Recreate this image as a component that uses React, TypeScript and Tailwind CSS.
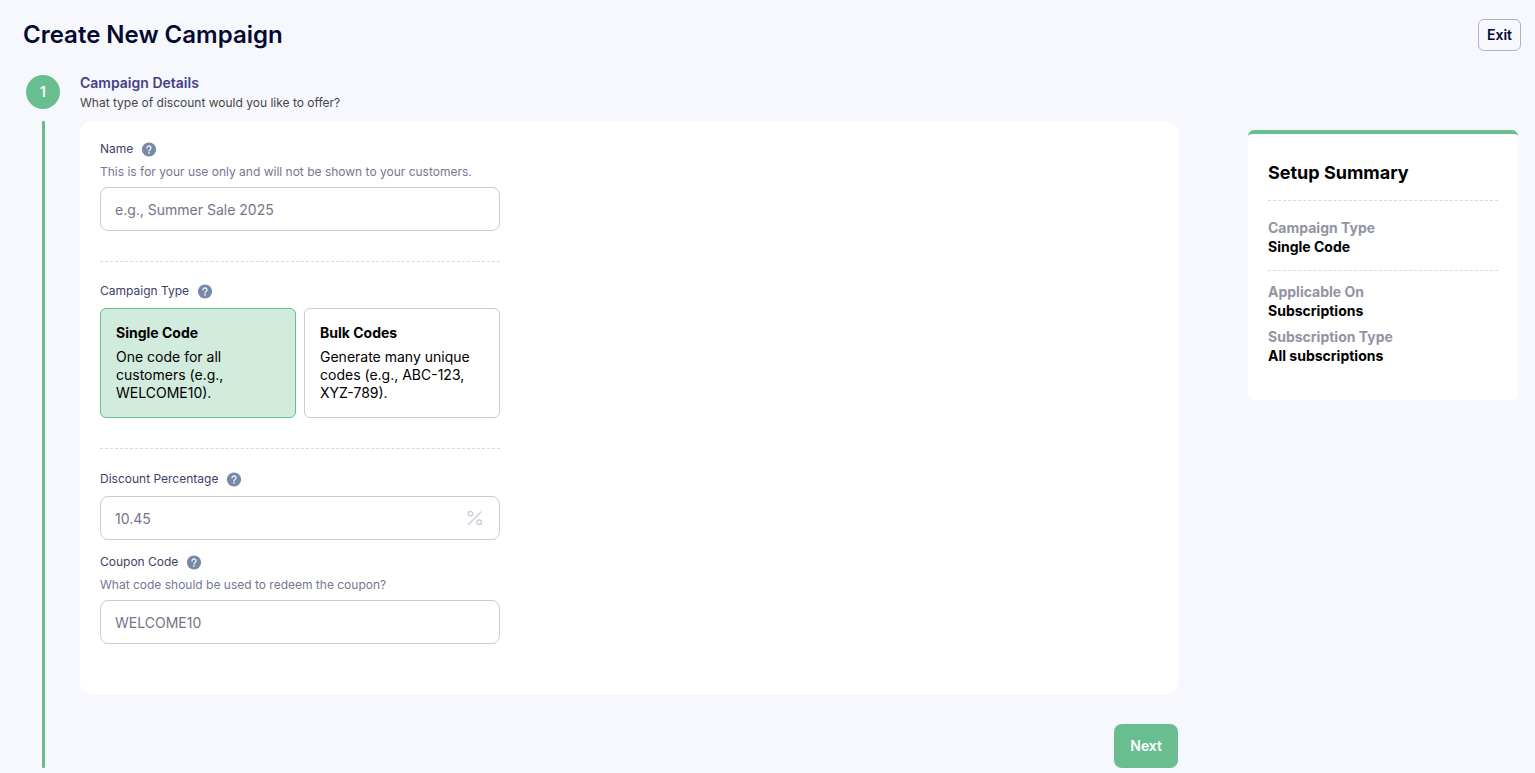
import { useState } from "react";
import type { ReactNode } from "react";

function HelpIcon() {
  return (
    <svg viewBox="0 0 16 16" className="h-4 w-4" aria-hidden="true">
      <circle cx="8" cy="8.5" r="7.1" fill="#7789a6" />
      <path
        d="M6 7a2 2 0 1 1 3.1 1.6c-.8.5-1.1.7-1.1 1.3"
        fill="none"
        stroke="#fff"
        strokeWidth="1.2"
        strokeLinecap="round"
      />
      <circle cx="8" cy="11.9" r="0.8" fill="#fff" />
    </svg>
  );
}

function PercentIcon() {
  return (
    <svg
      viewBox="0 0 16 16"
      className="h-4 w-4"
      fill="none"
      stroke="#c9cad6"
      strokeWidth="1.3"
      strokeLinecap="round"
      aria-hidden="true"
    >
      <path d="M1.7 14.2 14 2" />
      <circle cx="3.4" cy="3.6" r="2.3" />
      <circle cx="12.2" cy="12.2" r="2.3" />
    </svg>
  );
}

function LabelRow({ children }: { children: ReactNode }) {
  return (
    <div className="flex items-center gap-2 text-xs leading-4 text-[#3f4168]">
      {children}
      <HelpIcon />
    </div>
  );
}

type FieldProps = {
  id: string;
  label: string;
  placeholder: string;
  hint?: string;
  icon?: ReactNode;
};

function Field({ id, label, placeholder, hint, icon }: FieldProps) {
  return (
    <div>
      <LabelRow>
        <label htmlFor={id}>{label}</label>
      </LabelRow>
      {hint && <p className="mt-[7px] text-xs leading-4 text-[#757795]">{hint}</p>}
      <div
        className={`flex h-11 items-center rounded-lg border border-[#cbcbd6] bg-white px-[14px] ${
          hint ? "mt-[7px]" : "mt-[9px]"
        }`}
      >
        <input
          id={id}
          type="text"
          placeholder={placeholder}
          className="h-full min-w-0 flex-1 bg-transparent text-sm text-[#3f4168] outline-none placeholder:text-[#757589]"
        />
        {icon && <span className="mr-[2px]">{icon}</span>}
      </div>
    </div>
  );
}

function TypeOption(props: {
  title: string;
  text: string;
  checked: boolean;
  onSelect: () => void;
}) {
  return (
    <label
      className={`block flex-1 cursor-pointer rounded-[6px] border p-[15px] text-black ${
        props.checked ? "border-[#68be8f] bg-[#d1ebdd]" : "border-[#cbcbcb] bg-white"
      }`}
    >
      <input
        type="radio"
        name="campaign-type"
        className="sr-only"
        checked={props.checked}
        onChange={props.onSelect}
      />
      <span className="block text-sm leading-[18px] font-bold">{props.title}</span>
      <span className="mt-[6px] block text-sm leading-[18px]">{props.text}</span>
    </label>
  );
}

function SummaryItem({ name, value }: { name: string; value: string }) {
  return (
    <div className="text-sm leading-[19px] font-bold">
      <dt className="text-[#9294a4]">{name}</dt>
      <dd className="text-black">{value}</dd>
    </div>
  );
}

const TYPES = [
  { title: "Single Code", text: "One code for all customers (e.g., WELCOME10)." },
  { title: "Bulk Codes", text: "Generate many unique codes (e.g., ABC-123, XYZ-789)." },
];

export default function App() {
  const [type, setType] = useState("Single Code");

  return (
    <div className="min-h-screen bg-[#f7f8fe] font-['Inter',sans-serif]">
      <header className="flex items-center justify-between pt-[19px] pr-[14px] pl-[23px]">
        <h1 className="text-2xl leading-8 font-semibold text-[#050a30]">Create New Campaign</h1>
        <button
          type="button"
          className="h-8 rounded-[6px] border border-[#b1b1bd] px-2 text-sm font-semibold text-[#050a30]"
        >
          Exit
        </button>
      </header>

      <div className="mt-6 flex items-stretch pr-[17px] pb-[5px] pl-[26px]">
        <div className="mr-5 flex w-[34px] shrink-0 flex-col">
          <span className="flex h-[34px] items-center justify-center rounded-full bg-[#68be8f] text-sm font-semibold text-white">
            1
          </span>
          <span className="mt-3 ml-4 w-[3px] flex-1 rounded-[1px] bg-[#68be8f]" />
        </div>

        <main className="min-w-0 flex-1">
          <h2 className="text-sm leading-4 font-semibold text-[#463f87]">Campaign Details</h2>
          <p className="mt-1 text-xs leading-4 text-[#464646]">
            What type of discount would you like to offer?
          </p>

          <form className="mt-[10px]" onSubmit={(event) => event.preventDefault()}>
            <div className="rounded-xl bg-white px-5 pt-5 pb-[50px]">
              <div className="max-w-[400px]">
                <Field
                  id="name"
                  label="Name"
                  hint="This is for your use only and will not be shown to your customers."
                  placeholder="e.g., Summer Sale 2025"
                />
                <hr className="mt-[30px] border-t border-dashed border-[#d9d9e2]" />
                <fieldset className="mt-[21px]" aria-label="Campaign Type">
                  <LabelRow>
                    <span>Campaign Type</span>
                  </LabelRow>
                  <div className="mt-[9px] flex gap-2">
                    {TYPES.map((item) => (
                      <TypeOption
                        key={item.title}
                        title={item.title}
                        text={item.text}
                        checked={type === item.title}
                        onSelect={() => setType(item.title)}
                      />
                    ))}
                  </div>
                </fieldset>
                <hr className="mt-[30px] border-t border-dashed border-[#d2dae6]" />
                <div className="mt-[22px] flex flex-col gap-[14px]">
                  <Field
                    id="discount"
                    label="Discount Percentage"
                    placeholder="10.45"
                    icon={<PercentIcon />}
                  />
                  <Field
                    id="coupon"
                    label="Coupon Code"
                    hint="What code should be used to redeem the coupon?"
                    placeholder="WELCOME10"
                  />
                </div>
              </div>
            </div>
            <div className="mt-[30px] flex justify-end">
              <button
                type="submit"
                className="h-11 rounded-lg bg-[#68be8f] px-4 text-sm font-semibold text-white"
              >
                Next
              </button>
            </div>
          </form>
        </main>

        <aside className="mt-[55px] ml-[70px] w-[270px] shrink-0 self-start rounded-[6px] border-t-4 border-[#68be8f] bg-white px-5 pt-[27px] pb-[35px]">
          <h2 className="text-lg leading-6 font-bold text-black">Setup Summary</h2>
          <hr className="mt-[15px] mb-[17px] border-t border-dashed border-[#d2dae6]" />
          <dl>
            <SummaryItem name="Campaign Type" value={type} />
          </dl>
          <hr className="mt-[14px] mb-[11px] border-t border-dashed border-[#d2dae6]" />
          <dl className="flex flex-col gap-[7px]">
            <SummaryItem name="Applicable On" value="Subscriptions" />
            <SummaryItem name="Subscription Type" value="All subscriptions" />
          </dl>
        </aside>
      </div>
    </div>
  );
}
